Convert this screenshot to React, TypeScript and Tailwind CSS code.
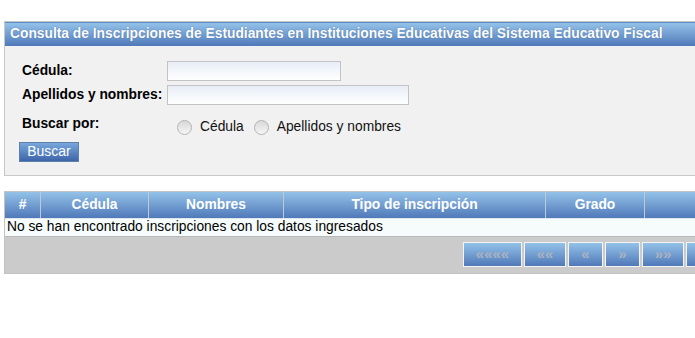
import React from "react";

const blueGrad = "bg-[linear-gradient(to_bottom,#93c2e8,#5079b9)]";

function Radio({ label }: { label: string }) {
  return (
    <label className="flex items-center">
      <span className="w-[15px] h-[15px] rounded-full border border-[#b4b4b4] bg-[linear-gradient(to_bottom,#d8d8d8,#f6f6f6)]" />
      <span className="ml-[8px] text-[13.8px] text-[#111]">{label}</span>
    </label>
  );
}

function Field({ width }: { width: string }) {
  return (
    <div
      className={`h-[20px] border border-[#c3c3c3] bg-[linear-gradient(to_bottom,#e8edf6,#ffffff)] ${width}`}
    />
  );
}

const columns = [
  { title: "#", w: "w-[36px]" },
  { title: "Cédula", w: "w-[108px]" },
  { title: "Nombres", w: "w-[135px]" },
  { title: "Tipo de inscripción", w: "w-[262px]" },
  { title: "Grado", w: "w-[99px]" },
  { title: "", w: "w-[80px]" },
];

const pages = [
  { g: "««««", w: "w-[59px]" },
  { g: "««", w: "w-[42px]" },
  { g: "«", w: "w-[35px]" },
  { g: "»", w: "w-[35px]" },
  { g: "»»", w: "w-[42px]" },
  { g: "", w: "w-[59px]" },
];

export default function App() {
  return (
    <div className="w-[695px] h-[338px] overflow-hidden bg-white pt-[21px] pl-[4px] font-['Liberation_Sans',Arial,sans-serif]">
      {/* search panel */}
      <div className="w-[760px] h-[155px] border border-[#c8c8c8] bg-[#f1f1f1]">
        <div className={`h-[24px] ${blueGrad} border-t border-[#5b8cc8] pl-[5px] flex items-center`}>
          <span className="text-white font-bold text-[13.8px] [text-shadow:0_0_1px_#3a5f99]">
            Consulta de Inscripciones de Estudiantes en Instituciones Educativas del Sistema Educativo Fiscal
          </span>
        </div>
        <div className="pl-[17px] pt-[15px]">
          <div className="flex items-center h-[20px]">
            <span className="w-[145px] font-bold text-[13.8px] text-black">Cédula:</span>
            <Field width="w-[174px]" />
          </div>
          <div className="flex items-center h-[20px] mt-[4px]">
            <span className="w-[145px] font-bold text-[13.8px] text-black">Apellidos y nombres:</span>
            <Field width="w-[242px]" />
          </div>
          <div className="flex items-start mt-[9px] h-[20px]">
            <span className="w-[155px] font-bold text-[13.8px] text-black">Buscar por:</span>
            <div className="flex items-center gap-[10px] mt-[3px]">
              <Radio label="Cédula" />
              <Radio label="Apellidos y nombres" />
            </div>
          </div>
          <div className="mt-[5px] -ml-[3px]">
            <button className="h-[20px] w-[60px] border border-[#5d7fa8] bg-[linear-gradient(to_bottom,#79a6dc,#3c66a9)] text-white text-[14px] leading-none pb-[1px]">
              Buscar
            </button>
          </div>
        </div>
      </div>

      {/* results table */}
      <div className="mt-[15px] w-[760px] border border-[#c3c3c3]">
        <div className={`flex h-[26px] ${blueGrad}`}>
          {columns.map((c, i) => (
            <div
              key={i}
              className={`${c.w} flex items-center justify-center text-white font-bold text-[13.8px] ${
                i < columns.length - 1 ? "border-r border-[#bfc8d4]" : ""
              }`}
            >
              {c.title}
            </div>
          ))}
        </div>
        <div className="h-[18px] bg-[#f6fcfc] border-t border-[#dfe6ee] flex items-center pl-[2px] text-[13.8px] text-black">
          No se han encontrado inscripciones con los datos ingresados
        </div>
        <div className="h-[37px] bg-[#cbcbcb] border-t border-[#b8b8b8] flex items-start pt-[5px] pl-[458px] gap-[2px]">
          {pages.map((p, i) => (
            <div
              key={i}
              className={`${p.w} h-[25px] border border-[#f4f4f4] ${blueGrad} flex items-center justify-center text-[#a9b2c0] text-[15px] font-bold`}
            >
              {p.g}
            </div>
          ))}
        </div>
      </div>
    </div>
  );
}
